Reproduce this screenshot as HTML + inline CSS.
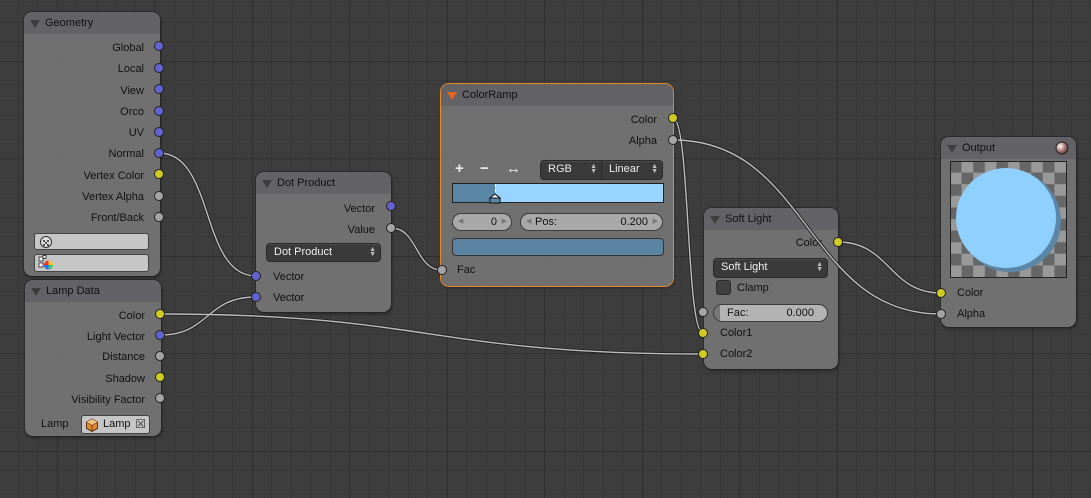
<!DOCTYPE html>
<html><head><meta charset="utf-8"><style>
*{box-sizing:border-box;margin:0;padding:0}
body{width:1091px;height:498px;overflow:hidden;background:#3d3d3d;font-family:"Liberation Sans",sans-serif;font-size:11px;color:#111;position:relative}
.abs{position:absolute}
.node{position:absolute;background:rgba(116,116,116,0.93);border-radius:8px;box-shadow:0 0 0 1px rgba(30,30,30,.5),1px 2px 3px rgba(0,0,0,.35)}
.hdr{position:absolute;left:0;right:0;top:0;height:22px;background:rgba(96,96,102,.9);border-radius:8px 8px 0 0;padding-left:21px;line-height:22px;color:#111}
.tri{position:absolute;left:6px;top:8px;width:0;height:0;border-left:5px solid transparent;border-right:5px solid transparent;border-top:8px solid #3e3e3e}
.r{position:absolute;right:16px;text-align:right;white-space:nowrap;margin-top:1px}
.l{position:absolute;left:16px;white-space:nowrap;margin-top:1px}
.dd{position:absolute;background:#3a3a3a;border:1px solid #2a2a2a;border-radius:4px;color:#eee;padding-left:7px;line-height:17px;box-shadow:inset 0 1px 0 rgba(255,255,255,.08)}
.ud{position:absolute;right:4px;top:3px;font-size:7px;line-height:5px;color:#bbb}
.btn{position:absolute;background:#c6c6c6;border:1px solid #444;border-radius:3px}
.num{position:absolute;background:#a9a9a9;border:1px solid #3c3c3c;border-radius:9px;line-height:16px;color:#111}
</style></head><body>
<svg class="abs" style="left:0;top:0" width="1091" height="498">
<defs>
<pattern id="g" x="18" y="2.5" width="19.5" height="19.5" patternUnits="userSpaceOnUse"><path d="M0 0V19.5M0 0H19.5" stroke="#333" stroke-width="1"/></pattern>
<pattern id="G" x="57" y="61" width="97.5" height="97.5" patternUnits="userSpaceOnUse"><path d="M0 0V97.5M0 0H97.5" stroke="#272727" stroke-width="1.2"/></pattern>
</defs>
<rect width="1091" height="498" fill="#3d3d3d"/>
<rect width="1091" height="498" fill="url(#g)"/>
<rect width="1091" height="498" fill="url(#G)"/>
</svg>

<!-- Geometry -->
<div class="node" style="left:24px;top:12px;width:136px;height:264px">
<div class="hdr"><div class="tri"></div>Geometry</div>
<div class="r" style="top:29px">Global</div>
<div class="r" style="top:50px">Local</div>
<div class="r" style="top:72px">View</div>
<div class="r" style="top:93px">Orco</div>
<div class="r" style="top:114px">UV</div>
<div class="r" style="top:135px">Normal</div>
<div class="r" style="top:157px">Vertex Color</div>
<div class="r" style="top:178px">Vertex Alpha</div>
<div class="r" style="top:199px">Front/Back</div>
<div class="btn" style="left:10px;top:221px;width:115px;height:17px"><svg width="14" height="14" style="position:absolute;left:4px;top:1px"><circle cx="7" cy="7" r="5.5" fill="#ddd" stroke="#333"/><path d="M4 5h2v2H4zM8 5h2v2H8zM6 7h2v2H6zM4 9h2v2H4zM8 9h2v2H8z" fill="#555"/></svg></div>
<div class="btn" style="left:10px;top:242px;width:115px;height:18px"><svg width="16" height="16" style="position:absolute;left:3px;top:0px"><rect x="1" y="2" width="4" height="4" fill="#fff" stroke="#222" stroke-width=".8"/><rect x="5" y="0.5" width="3" height="3" fill="#fff" stroke="#222" stroke-width=".8"/><rect x="1" y="8" width="4" height="4" fill="#fff" stroke="#222" stroke-width=".8"/><circle cx="10.5" cy="10" r="4.5" fill="#e33"/><path d="M10.5 10V5.5A4.5 4.5 0 0 1 15 10z" fill="#fc3"/><path d="M10.5 10H15A4.5 4.5 0 0 1 10.5 14.5z" fill="#3c6"/><path d="M10.5 10V14.5A4.5 4.5 0 0 1 6 10z" fill="#36f"/></svg></div>
</div>

<!-- Lamp Data -->
<div class="node" style="left:25px;top:280px;width:136px;height:156px">
<div class="hdr"><div class="tri"></div>Lamp Data</div>
<div class="r" style="top:29px">Color</div>
<div class="r" style="top:50px">Light Vector</div>
<div class="r" style="top:70px">Distance</div>
<div class="r" style="top:92px">Shadow</div>
<div class="r" style="top:113px">Visibility Factor</div>
<div class="l" style="top:137px;left:16px">Lamp</div>
<div class="btn" style="left:56px;top:135px;width:69px;height:19px;line-height:17px;padding-left:21px">Lamp<span style="position:absolute;right:3px;top:0;font-size:12px;color:#333">☒</span><svg width="14" height="14" style="position:absolute;left:3px;top:2px"><path d="M7 1L12.5 4V10.5L7 13.5L1.5 10.5V4Z" fill="#e08a2e" stroke="#5a3310"/><path d="M1.5 4L7 7L12.5 4M7 7V13.5" fill="none" stroke="#5a3310"/><path d="M1.5 4L7 1L12.5 4L7 7Z" fill="#f5c080"/></svg></div>
</div>

<!-- Dot Product -->
<div class="node" style="left:256px;top:172px;width:135px;height:140px">
<div class="hdr"><div class="tri"></div>Dot Product</div>
<div class="r" style="top:30px">Vector</div>
<div class="r" style="top:51px">Value</div>
<div class="dd" style="left:10px;top:71px;width:115px;height:19px">Dot Product<div class="ud">▲<br>▼</div></div>
<div class="l" style="top:98px;left:17px">Vector</div>
<div class="l" style="top:119px;left:17px">Vector</div>
</div>

<!-- ColorRamp -->
<div class="node" style="left:441px;top:84px;width:232px;height:202px;box-shadow:0 0 0 1px #e58a2a,1px 2px 3px rgba(0,0,0,.35)">
<div class="hdr" style="padding-left:21px"><div class="tri" style="border-top-color:#e0691d"></div>ColorRamp</div>
<div class="r" style="top:29px">Color</div>
<div class="r" style="top:50px">Alpha</div>
<div class="abs" style="left:14px;top:77px;color:#eee;font-size:15px;font-weight:bold;line-height:16px">+</div>
<div class="abs" style="left:39px;top:77px;color:#eee;font-size:15px;font-weight:bold;line-height:16px">−</div>
<div class="abs" style="left:65px;top:77px;color:#eee;font-size:15px;line-height:16px">↔</div>
<div class="dd" style="left:99px;top:76px;width:62px;height:20px;border-radius:4px 0 0 4px">RGB<div class="ud">▲<br>▼</div></div>
<div class="dd" style="left:160px;top:76px;width:62px;height:20px;border-radius:0 4px 4px 0">Linear<div class="ud">▲<br>▼</div></div>
<div class="abs" style="left:11px;top:99px;width:212px;height:20px;background:#99d3ff;border:1px solid #222"><div class="abs" style="left:0;top:0;width:42px;height:18px;background:#5a86a6"></div><div class="abs" style="left:42px;top:0;height:18px;border-left:1px dashed #fff"></div><svg class="abs" style="left:36px;top:9px" width="12" height="11"><path d="M1 5L6 1L11 5V10H1Z" fill="#5a86a6" stroke="#111"/><path d="M1 5L6 1L11 5Z" fill="#fff" stroke="#111"/></svg></div>
<div class="num" style="left:11px;top:129px;width:60px;height:18px;text-align:right;padding-right:14px">0<span style="position:absolute;left:5px;color:#777;font-size:7px">◀</span><span style="position:absolute;right:4px;color:#777;font-size:7px">▶</span></div>
<div class="num" style="left:79px;top:129px;width:143px;height:18px;padding-left:14px">Pos:<span style="position:absolute;right:14px">0.200</span><span style="position:absolute;left:5px;color:#777;font-size:7px">◀</span><span style="position:absolute;right:4px;color:#777;font-size:7px">▶</span></div>
<div class="abs" style="left:11px;top:154px;width:212px;height:18px;background:#5b84a3;border:1px solid #333;border-radius:4px"></div>
<div class="l" style="top:179px;left:16px">Fac</div>
</div>

<!-- Soft Light -->
<div class="node" style="left:704px;top:208px;width:134px;height:161px">
<div class="hdr"><div class="tri"></div>Soft Light</div>
<div class="r" style="top:28px">Color</div>
<div class="dd" style="left:9px;top:50px;width:115px;height:20px">Soft Light<div class="ud">▲<br>▼</div></div>
<div class="abs" style="left:12px;top:72px;width:15px;height:15px;background:#404040;border:1px solid #2a2a2a;border-radius:3px"></div>
<div class="abs" style="left:33px;top:74px">Clamp</div>
<div class="num" style="left:9px;top:96px;width:115px;height:18px;background:#b3b3b3;padding-left:13px;overflow:hidden">Fac:<span style="position:absolute;right:13px">0.000</span><div class="abs" style="left:0;top:0;width:6px;height:16px;background:#777"></div></div>
<div class="l" style="top:118px;left:16px">Color1</div>
<div class="l" style="top:139px;left:16px">Color2</div>
</div>

<!-- Output -->
<div class="node" style="left:941px;top:137px;width:135px;height:190px">
<div class="hdr"><div class="tri"></div>Output<svg style="position:absolute;right:7px;top:4px" width="14" height="14"><defs><radialGradient id="sp" cx=".35" cy=".35" r=".7"><stop offset="0" stop-color="#fff"/><stop offset=".5" stop-color="#b88"/><stop offset="1" stop-color="#533"/></radialGradient></defs><circle cx="7" cy="7" r="6" fill="url(#sp)" stroke="#222"/></svg></div>
<svg class="abs" style="left:9px;top:24px" width="117" height="117">
<defs><pattern id="ck" width="23.2" height="23.2" patternUnits="userSpaceOnUse"><rect width="23.2" height="23.2" fill="#999"/><rect width="11.6" height="11.6" fill="#666"/><rect x="11.6" y="11.6" width="11.6" height="11.6" fill="#666"/></pattern></defs>
<rect x=".5" y=".5" width="116" height="116" fill="url(#ck)" stroke="#222"/>
<circle cx="60" cy="60" r="51" fill="#5b86a6"/>
<circle cx="56" cy="57" r="50" fill="#8fd0ff"/>
</svg>
<div class="l" style="top:149px;left:16px">Color</div>
<div class="l" style="top:170px;left:16px">Alpha</div>
</div>

<!-- wires + sockets -->
<svg class="abs" style="left:0;top:0" width="1091" height="498">
<g fill="none">
<g stroke="#222" stroke-width="3.2">
<path d="M159 153C215 153 200 276 256 276"/>
<path d="M160 314C430 314 430 354 703 354"/>
<path d="M160 335C210 335 205 297 256 297"/>
<path d="M391 228C418 228 415 270 442 270"/>
<path d="M673 118C690 118 686 333 703 333"/>
<path d="M673 140C810 140 805 314 941 314"/>
<path d="M838 242C890 242 889 293 941 293"/>
</g>
<g stroke="#bdbdbd" stroke-width="1.4">
<path d="M159 153C215 153 200 276 256 276"/>
<path d="M160 314C430 314 430 354 703 354"/>
<path d="M160 335C210 335 205 297 256 297"/>
<path d="M391 228C418 228 415 270 442 270"/>
<path d="M673 118C690 118 686 333 703 333"/>
<path d="M673 140C810 140 805 314 941 314"/>
<path d="M838 242C890 242 889 293 941 293"/>
</g>
</g>
<g stroke="#222" stroke-width="1">
<g fill="#6363d0">
<circle cx="159" cy="46" r="4.5"/><circle cx="159" cy="68" r="4.5"/><circle cx="159" cy="89" r="4.5"/><circle cx="159" cy="111" r="4.5"/><circle cx="159" cy="132" r="4.5"/><circle cx="159" cy="153" r="4.5"/>
<circle cx="160" cy="335" r="4.5"/><circle cx="391" cy="206" r="4.5"/><circle cx="256" cy="276" r="4.5"/><circle cx="256" cy="297" r="4.5"/>
</g>
<g fill="#cccc22">
<circle cx="159" cy="174" r="4.5"/><circle cx="160" cy="314" r="4.5"/><circle cx="160" cy="377" r="4.5"/>
<circle cx="673" cy="118" r="4.5"/><circle cx="838" cy="242" r="4.5"/><circle cx="703" cy="333" r="4.5"/><circle cx="703" cy="354" r="4.5"/><circle cx="941" cy="293" r="4.5"/>
</g>
<g fill="#a5a5a5">
<circle cx="159" cy="196" r="4.5"/><circle cx="159" cy="217" r="4.5"/><circle cx="160" cy="356" r="4.5"/><circle cx="160" cy="398" r="4.5"/>
<circle cx="391" cy="228" r="4.5"/><circle cx="442" cy="270" r="4.5"/><circle cx="673" cy="140" r="4.5"/><circle cx="703" cy="312" r="4.5"/><circle cx="941" cy="314" r="4.5"/>
</g>
</g>
</svg>
</body></html>
